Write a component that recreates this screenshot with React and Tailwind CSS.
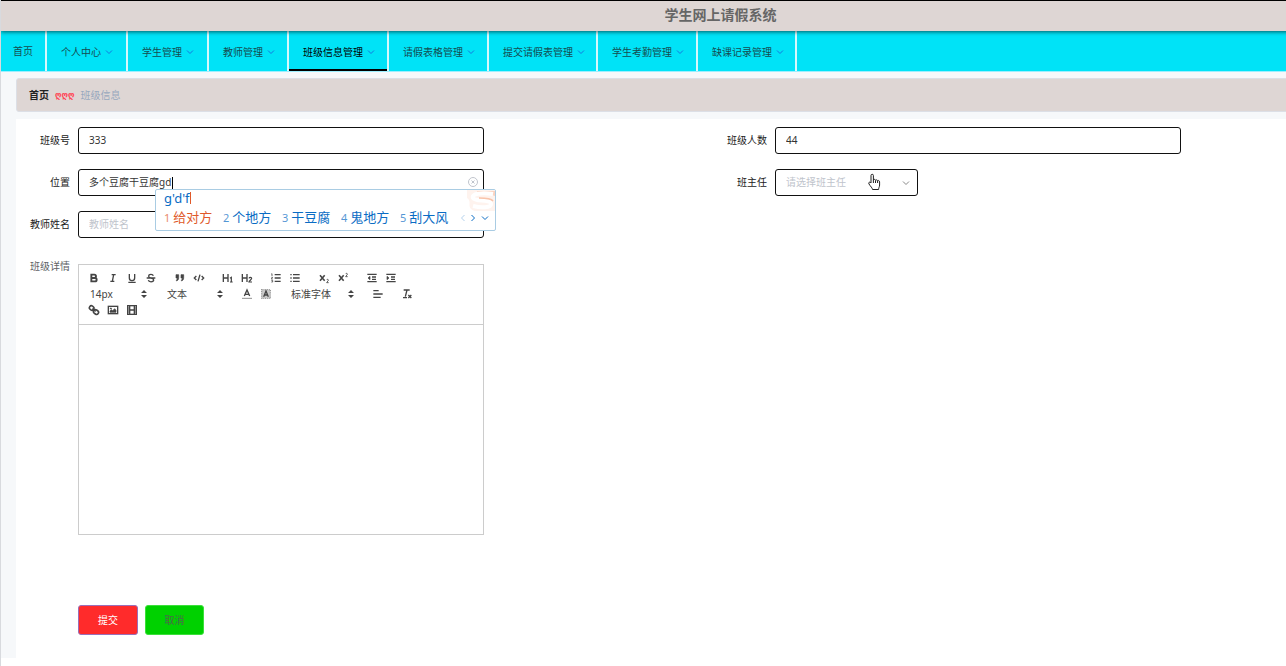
import React, { useState } from 'react';

const menus = [
  { name: '个人中心', width: 'w-[81px]' },
  { name: '学生管理', width: 'w-[81px]' },
  { name: '教师管理', width: 'w-[80px]' },
  { name: '班级信息管理', width: 'w-[100px]', active: true },
  { name: '请假表格管理', width: 'w-[100px]' },
  { name: '提交请假表管理', width: 'w-[109px]' },
  { name: '学生考勤管理', width: 'w-[100px]' },
  { name: '缺课记录管理', width: 'w-[99px]' },
];

const candidates = ['给对方', '个地方', '干豆腐', '鬼地方', '刮大风'];

const Chevron = ({ className }) => (
  <svg viewBox="0 0 8 8" className={className} fill="none" stroke="currentColor">
    <path d="M1 2.5l3 3 3-3" />
  </svg>
);

// toolbar icons, drawn on an 18x18 grid
const icons = {
  bold: (
    <g strokeWidth="2.8">
      <path d="M5 4h4.5a2.5 2.5 0 0 1 0 5H5zM5 9h5.5a2.5 2.5 0 0 1 0 5H5z" />
    </g>
  ),
  italic: <path d="M7 4h6M5 14h6M8 14l2-10" />,
  underline: <path d="M5 3v6a4 4 0 0 0 8 0V3M3.5 15.5h11" />,
  strike: (
    <path d="M2.5 9h13M12.5 5.5C12 4 10.500 3.500 9 3.500 7 3.500 5.500 4.500 5.500 6.200 5.500 8 7 8.500 9 9s4 1 4 3-2 2.700-4 2.700S5.300 14 5 12.300" />
  ),
  quote: (
    <g fill="currentColor" strokeWidth="1">
      <path d="M3 4h4v4.500c0 2.500-1 4-3 5l-.500-1.200C4.500 11.500 5 10.500 5 9H3zM10.500 4h4v4.500c0 2.500-1 4-3 5l-.500-1.200c1-.8 1.500-1.800 1.500-3.300h-2z" />
    </g>
  ),
  code: <path d="M5 6L2 9l3 3M13 6l3 3-3 3M10.500 4l-3 10" />,
  h1: (
    <>
      <path d="M2 3v12M9 3v12M2 9h7" />
      <path strokeWidth="1.800" d="M12 9.500l2-1.500v7M12 15h4" />
    </>
  ),
  h2: (
    <>
      <path d="M2 3v12M9 3v12M2 9h7" />
      <path strokeWidth="1.800" d="M12 9.500c.5-2 4-2 4 0S12.500 13 12 15h4.500" />
    </>
  ),
  ordered: (
    <>
      <path d="M7 4h9M7 9h9M7 14h9" />
      <path strokeWidth="1.200" d="M2 3l1-.5V6M2 8h2L2 10.500h2M2 12.500h2V15H2" />
    </>
  ),
  bullet: <path d="M6 4h10M6 9h10M6 14h10M2 4h2M2 9h2M2 14h2" />,
  sub: (
    <>
      <path strokeWidth="2.400" d="M3 5l7 8M10 5l-7 8" />
      <path strokeWidth="1.300" d="M13 12c.5-1.500 3-1 2.500.5L13 16h3" />
    </>
  ),
  sup: (
    <>
      <path strokeWidth="2.400" d="M3 5l7 8M10 5l-7 8" />
      <path strokeWidth="1.300" d="M13 3c.5-1.500 3-1 2.500.5L13 7h3" />
    </>
  ),
  outdent: (
    <>
      <path d="M2 3.500h14M9 7.500h6M9 11h6M2 14.500h14" />
      <path fill="currentColor" strokeWidth="1" d="M6 6.500v5L3 9z" />
    </>
  ),
  indent: (
    <>
      <path d="M2 3.500h14M9 7.500h6M9 11h6M2 14.500h14" />
      <path fill="currentColor" strokeWidth="1" d="M3 6.500v5L6 9z" />
    </>
  ),
  color: (
    <>
      <path d="M5 12L9 3l4 9M6.500 9.500h5" />
      <path strokeWidth="1.500" opacity="0.6" d="M1.500 15.500h15" />
    </>
  ),
  background: (
    <>
      <path fill="#ccc" stroke="#999" strokeWidth="2" strokeDasharray="1.500 1.200" d="M2.500 2.500h13v13h-13z" />
      <path d="M5.500 13L9 4.500l3.500 8.500M6.500 10.500h5" />
    </>
  ),
  align: <path d="M2 4h8M2 9h14M2 14h11" />,
  clean: (
    <>
      <path d="M4 3h9M9 3L6.500 13M3 14.500h6" />
      <path d="M11 10.500l4.500 4.500M15.500 10.500L11 15" />
    </>
  ),
  link: (
    <g strokeWidth="2.400">
      <rect x="2" y="3" width="7" height="6" rx="3" transform="rotate(35 5.500 6)" />
      <rect x="8" y="9" width="8" height="6" rx="3" transform="rotate(35 12 12)" />
      <path d="M6.500 7l5 4" />
    </g>
  ),
  image: (
    <>
      <rect x="2" y="3.500" width="14" height="11" />
      <path fill="currentColor" strokeWidth="1" d="M4.500 12.500v-2l2-2 2 1.500 3-3 2 2.500v3zM5 6h1.500v1.500H5z" />
    </>
  ),
  video: (
    <>
      <rect x="2.500" y="2.500" width="13" height="13" />
      <path d="M5.500 3v12M12.500 3v12M6 9h6" />
      <path strokeWidth="1.200" d="M3 6h2.500M3 9h2.500M3 12h2.500M12.500 6H15M12.500 9H15M12.500 12H15" />
    </>
  ),
};

const ToolGroup = ({ names }) => (
  <div className="mr-2.5 flex">
    {names.map((name) => (
      <button key={name} type="button" aria-label={name} className="flex h-4 w-[19px] items-center justify-center">
        <svg viewBox="0 0 18 18" className="h-3 w-3" fill="none" stroke="currentColor" strokeWidth="2">
          {icons[name]}
        </svg>
      </button>
    ))}
  </div>
);

const ToolSelect = ({ label, text, width }) => (
  <div className={`relative mr-2.5 h-4 ${width}`}>
    <select aria-label={label} className="block h-4 w-full appearance-none pl-1.5 text-[10px] leading-4">
      <option>{text}</option>
    </select>
    <svg viewBox="0 0 6 8" className="pointer-events-none absolute top-1 right-1 h-2 w-1.5" fill="currentColor">
      <path d="M3 0l3 3H0zM3 8L0 5h6z" />
    </svg>
  </div>
);

const Field = ({ id, label, children }) => (
  <div className="flex h-[27px] items-center">
    <label htmlFor={id} className="w-[62px] shrink-0 pr-2 text-right text-[10px] text-[#222]">
      {label}
    </label>
    {children}
  </div>
);

const inputStyle =
  'h-[27px] w-[406px] rounded-[3px] border border-[#111] bg-white px-2.5 pb-0.5 text-[10px] text-[#333] outline-none placeholder:text-[#c0c4cc]';

const InputMethod = () => (
  <div className="absolute top-5 left-[77px] z-10 h-[42px] w-[341px] overflow-hidden rounded-[2px] border border-[#a9cce3] bg-white pl-2 text-[13px] text-[#0a6cc4]">
    <div className="flex h-4 items-center leading-4">
      g&apos;d&apos;f
      <span className="h-3 w-px bg-[#e0592a]" />
    </div>
    <div className="mt-0.5 flex h-5 items-center">
      {candidates.map((word, i) => (
        <span key={word} className={`flex w-[59px] shrink-0 items-center gap-[3px] ${i === 0 ? 'text-[#e0592a]' : ''}`}>
          <span className="text-[11px] opacity-70">{i + 1}</span>
          {word}
        </span>
      ))}
      <Chevron className="h-2 w-2 rotate-90 opacity-30" />
      <Chevron className="ml-0.5 h-2 w-2 -rotate-90" />
      <Chevron className="ml-1 h-2 w-2" />
    </div>
    <svg viewBox="0 0 30 22" className="absolute top-0 right-0 h-[22px] w-[30px]">
      <path d="M2 0h28v21H10C0 18 8 12 2 8z" fill="#fef3ee" />
      <path d="M12 1h18v5c-6-2-12-2-18-1z" fill="#fbd3c0" />
      <path d="M28 4C16 2 6 4 8 8s18 1 18 6c0 4-10 4-18 2" fill="none" stroke="#fff" strokeWidth="4" />
      <path d="M14 8c5 0 12 0 14 3" fill="none" stroke="#f9c4ab" strokeWidth="1.500" />
    </svg>
  </div>
);

const App = () => {
  const [number, setNumber] = useState('333');
  const [count, setCount] = useState('44');
  const [place, setPlace] = useState('多个豆腐干豆腐gd');

  return (
    <div className="min-h-screen overflow-hidden border-l border-[#d8dade] bg-white font-['Noto_Sans','Noto_Sans_CJK_SC',sans-serif] text-[10px] text-[#333]">
      <div className="w-[112%]">
        <header className="relative z-10 flex h-[31px] items-center justify-center border-t border-black bg-[#ded6d4] shadow-[0_1px_4px_rgba(0,0,0,0.6)]">
          <h1 className="pb-0.5 text-sm leading-5 font-bold text-[#666]">学生网上请假系统</h1>
        </header>

        <nav className="flex h-[41px] border-b border-[#9defff] bg-[#00e3f7]">
          <a href="#home" className="flex w-[46px] items-center border-r-2 border-[#d5f8fc] pl-3 text-[#164b50]">
            首页
          </a>
          {menus.map((menu) => (
            <a
              key={menu.name}
              href="#menu"
              className={`flex shrink-0 border-r-2 border-[#d5f8fc] whitespace-nowrap ${menu.width}`}
            >
              <span
                className={`flex grow items-center border-b-2 pt-1 pl-3.5 ${
                  menu.active ? 'border-black text-black' : 'border-transparent text-[#164b50]'
                }`}
              >
                {menu.name}
                <Chevron className="ml-1 h-2 w-2 shrink-0 text-[#1478e0]" />
              </span>
            </a>
          ))}
        </nav>

        <main className="bg-[#f6f8fa] pt-1.5 pl-[15px]">
          <div className="flex h-[34px] items-center rounded-[3px] border border-[#dcdfe6] bg-[#ded6d4] pl-3">
            <a href="#home" className="font-bold text-[#222]">
              首页
            </a>
            <span className="mx-1.5 pt-0.5 font-['DejaVu_Sans',sans-serif] text-[8px] font-bold text-[#ff4757]">ღღღ</span>
            <span className="text-[#97a8be]">班级信息</span>
          </div>

          <form className="mt-[7px] bg-white pt-2 pb-[23px]" onSubmit={(e) => e.preventDefault()}>
            <div className="grid grid-cols-2 gap-y-[15px] pr-[30px]">
              <Field id="number" label="班级号">
                <input id="number" className={inputStyle} value={number} onChange={(e) => setNumber(e.target.value)} />
              </Field>
              <Field id="count" label="班级人数">
                <input id="count" className={inputStyle} value={count} onChange={(e) => setCount(e.target.value)} />
              </Field>
              <Field id="place" label="位置">
                <div className="relative">
                  <input id="place" className={inputStyle} value={place} onChange={(e) => setPlace(e.target.value)} />
                  {/* caret */}
                  <span className="absolute top-2 left-[94px] h-3 w-px bg-black" />
                  <button
                    type="button"
                    aria-label="清空"
                    className="absolute top-2 right-1.5 text-[#c0c4cc]"
                    onClick={() => setPlace('')}
                  >
                    <svg viewBox="0 0 10 10" className="h-2.5 w-2.5" fill="none" stroke="currentColor">
                      <circle cx="5" cy="5" r="4.500" />
                      <path d="M3.500 3.500l3 3M6.500 3.500l-3 3" />
                    </svg>
                  </button>
                  <InputMethod />
                </div>
              </Field>
              <Field id="teacher" label="班主任">
                <div className="relative">
                  <select
                    id="teacher"
                    className="block h-[27px] w-[143px] appearance-none rounded-[3px] border border-[#111] bg-white px-2.5 text-[10px] text-[#c0c4cc]"
                  >
                    <option>请选择班主任</option>
                  </select>
                  <Chevron className="pointer-events-none absolute top-2.5 right-2 h-2 w-2 text-[#888]" />
                  {/* hand pointer */}
                  <svg viewBox="0 0 14 17" className="pointer-events-none absolute top-1 left-[92px] h-[17px] w-3.5">
                    <path
                      d="M4 10V2.500a1.200 1.200 0 0 1 2.400 0V7c.3-1 2-.8 2.100.3.500-.8 2-.5 2.100.5.600-.6 2-.3 2 1v3.200c0 2-1 2.500-1 4.500H5.500c0-1.500-2-3-3.500-5.500-1-1.800 1-2.500 2-1z"
                      fill="#fff"
                      stroke="#222"
                    />
                    <path d="M6.400 7v3M8.500 7.500V10M10.600 8v2" stroke="#222" fill="none" />
                  </svg>
                </div>
              </Field>
              <Field id="name" label="教师姓名">
                <input id="name" className={inputStyle} placeholder="教师姓名" />
              </Field>
            </div>

            <div className="mt-5 flex items-start">
              <label htmlFor="detail" className="w-[62px] shrink-0 pr-2 text-right leading-4 text-[#606266]">
                班级详情
              </label>
              <div className="mt-1.5 w-[406px] border border-[#ccc] text-[#444]">
                <div className="flex h-[60px] flex-wrap content-start border-b border-[#ccc] p-[5px]">
                  <ToolGroup names={['bold', 'italic', 'underline', 'strike']} />
                  <ToolGroup names={['quote', 'code']} />
                  <ToolGroup names={['h1', 'h2']} />
                  <ToolGroup names={['ordered', 'bullet']} />
                  <ToolGroup names={['sub', 'sup']} />
                  <ToolGroup names={['outdent', 'indent']} />
                  <ToolSelect label="字号" text="14px" width="w-[67px]" />
                  <ToolSelect label="标题" text="文本" width="w-[66px]" />
                  <ToolGroup names={['color', 'background']} />
                  <ToolSelect label="字体" text="标准字体" width="w-[73px]" />
                  <ToolGroup names={['align']} />
                  <ToolGroup names={['clean']} />
                  <div className="w-full">
                    <ToolGroup names={['link', 'image', 'video']} />
                  </div>
                </div>
                <textarea id="detail" className="block h-[209px] w-full resize-none p-2.5 outline-none" />
              </div>
            </div>

            <div className="mt-[70px] flex gap-[7px] pl-[62px]">
              <button
                type="submit"
                className="h-[30px] w-[60px] rounded-[3px] border border-[#9a6fb8] bg-[#ff2b2b] text-white"
              >
                提交
              </button>
              <button
                type="button"
                className="h-[30px] w-[59px] rounded-[3px] border border-[#3be03b] bg-[#00d100] text-[#4a6a4a]"
              >
                取消
              </button>
            </div>
          </form>
        </main>
      </div>
    </div>
  );
};

export default App;
